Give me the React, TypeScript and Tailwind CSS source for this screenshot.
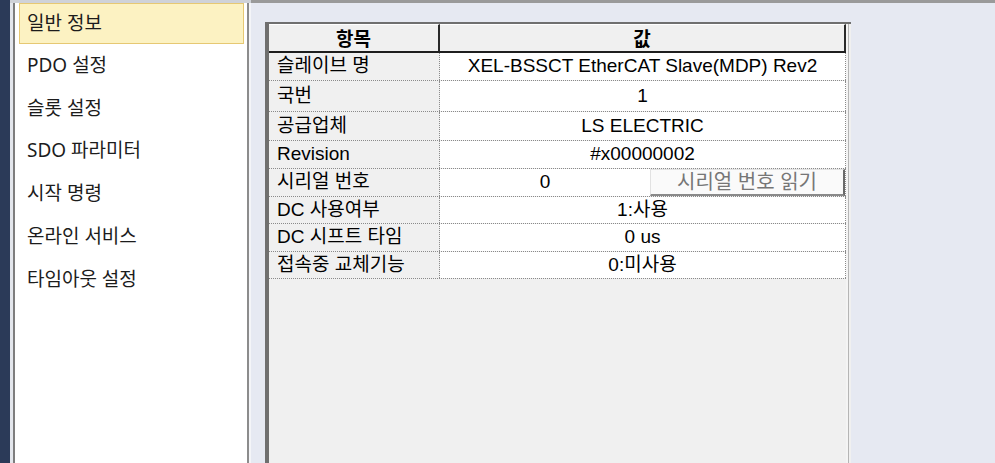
import React from "react";

type Row = {
  label: string;
  value: string;
  h: string;
  serial?: boolean;
};

const menu = [
  { name: "일반 정보", h: "h-[41px]" },
  { name: "PDO 설정", h: "h-[43px]" },
  { name: "슬롯 설정", h: "h-[42px]" },
  { name: "SDO 파라미터", h: "h-[43px]" },
  { name: "시작 명령", h: "h-[43px]" },
  { name: "온라인 서비스", h: "h-[43px]" },
  { name: "타임아웃 설정", h: "h-[43px]" },
];

const rows: Row[] = [
  { label: "슬레이브 명", value: "XEL-BSSCT EtherCAT Slave(MDP) Rev2", h: "h-[28px]" },
  { label: "국번", value: "1", h: "h-[31px]" },
  { label: "공급업체", value: "LS ELECTRIC", h: "h-[29px]" },
  { label: "Revision", value: "#x00000002", h: "h-[28px]" },
  { label: "시리얼 번호", value: "0", h: "h-[28px]", serial: true },
  { label: "DC 사용여부", value: "1:사용", h: "h-[27px]" },
  { label: "DC 시프트 타임", value: "0 us", h: "h-[28px]" },
  { label: "접속중 교체기능", value: "0:미사용", h: "h-[27px]" },
];

const sans = "font-['Noto_Sans','Noto_Sans_CJK_KR',sans-serif]";
const grid = "font-['Liberation_Sans','Noto_Sans_CJK_KR',sans-serif]";

function Sidebar() {
  return (
    <div className="flex h-full">
      <div className="w-[3px] bg-[#e3e6ec]" />
      <div className="w-[2px] bg-[#7e7e7e]" />
      <div className={`w-[232px] bg-white flex flex-col pl-[4px] pr-[3px] ${sans}`}>
        {menu.map((m, i) => (
          <div
            key={m.name}
            className={`${m.h} flex items-center pl-[7px] text-[19px] text-[#1c1c1c] ${
              i === 0 ? "bg-[#fcf2c2] border border-[#e6c873]" : "border border-transparent"
            }`}
          >
            {m.name}
          </div>
        ))}
      </div>
      <div className="w-[2px] bg-[#8c8c8c]" />
      <div className="w-[2px] bg-[#f4f5f8]" />
    </div>
  );
}

function PropGrid() {
  return (
    <div className={`w-[586px] h-full flex bg-[#f0f0f0] border-l-[4px] border-t-2 border-[#6f6f6f] ${grid}`}>
      <div className="flex flex-col w-[577px]">
        <div className="flex h-[29px] border-b-2 border-[#1e1e1e] text-[19px] font-bold text-black">
          <div className="w-[171px] flex items-center justify-center border-r-2 border-[#2a2a2a] border-t border-t-white">
            <span className="font-['Noto_Sans_CJK_KR',sans-serif]">항목</span>
          </div>
          <div className="w-[406px] flex items-center justify-center border-r-2 border-[#2a2a2a] border-t border-t-white">
            <span className="font-['Noto_Sans_CJK_KR',sans-serif]">값</span>
          </div>
        </div>
        {rows.map((r) => (
          <div key={r.label} className={`flex ${r.h} border-b border-dotted border-[#8a8a8a] text-[19px] text-black`}>
            <div className="w-[171px] flex items-center pl-[8px] bg-[#f0f0f0] border-r border-dotted border-[#8a8a8a]">
              {r.label}
            </div>
            <div className="w-[406px] flex items-center bg-white border-r border-dotted border-[#8a8a8a]">
              {r.serial ? (
                <div className="flex w-full h-full items-center">
                  <div className="w-[210px] text-center">{r.value}</div>
                  <div className="flex-1 h-full border-t border-l border-[#e2e2e2] border-r-2 border-b-2 border-r-[#6a6a6a] border-b-[#8a8a8a] bg-[#fafafa] flex items-center justify-center text-[#767676] text-[20px]">
                    시리얼 번호 읽기
                  </div>
                </div>
              ) : (
                <div className="w-full text-center">{r.value}</div>
              )}
            </div>
          </div>
        ))}
      </div>
      <div className="w-[2px] bg-[#f4f4f4]" />
      <div className="w-[1px] bg-[#b5b5b5]" />
    </div>
  );
}

export default function App() {
  return (
    <div className="w-[995px] h-[463px] flex overflow-hidden bg-[#e6e9f2]">
      <div className="w-[10px] h-full bg-[#2b3a58]" />
      <div className="h-full border-t-[3px] border-[#cfd2d8]">
        <Sidebar />
      </div>
      <div className="flex-1 h-full border-t-[3px] border-[#9a9a9a] pl-[14px] pt-[19px]">
        <PropGrid />
      </div>
    </div>
  );
}
